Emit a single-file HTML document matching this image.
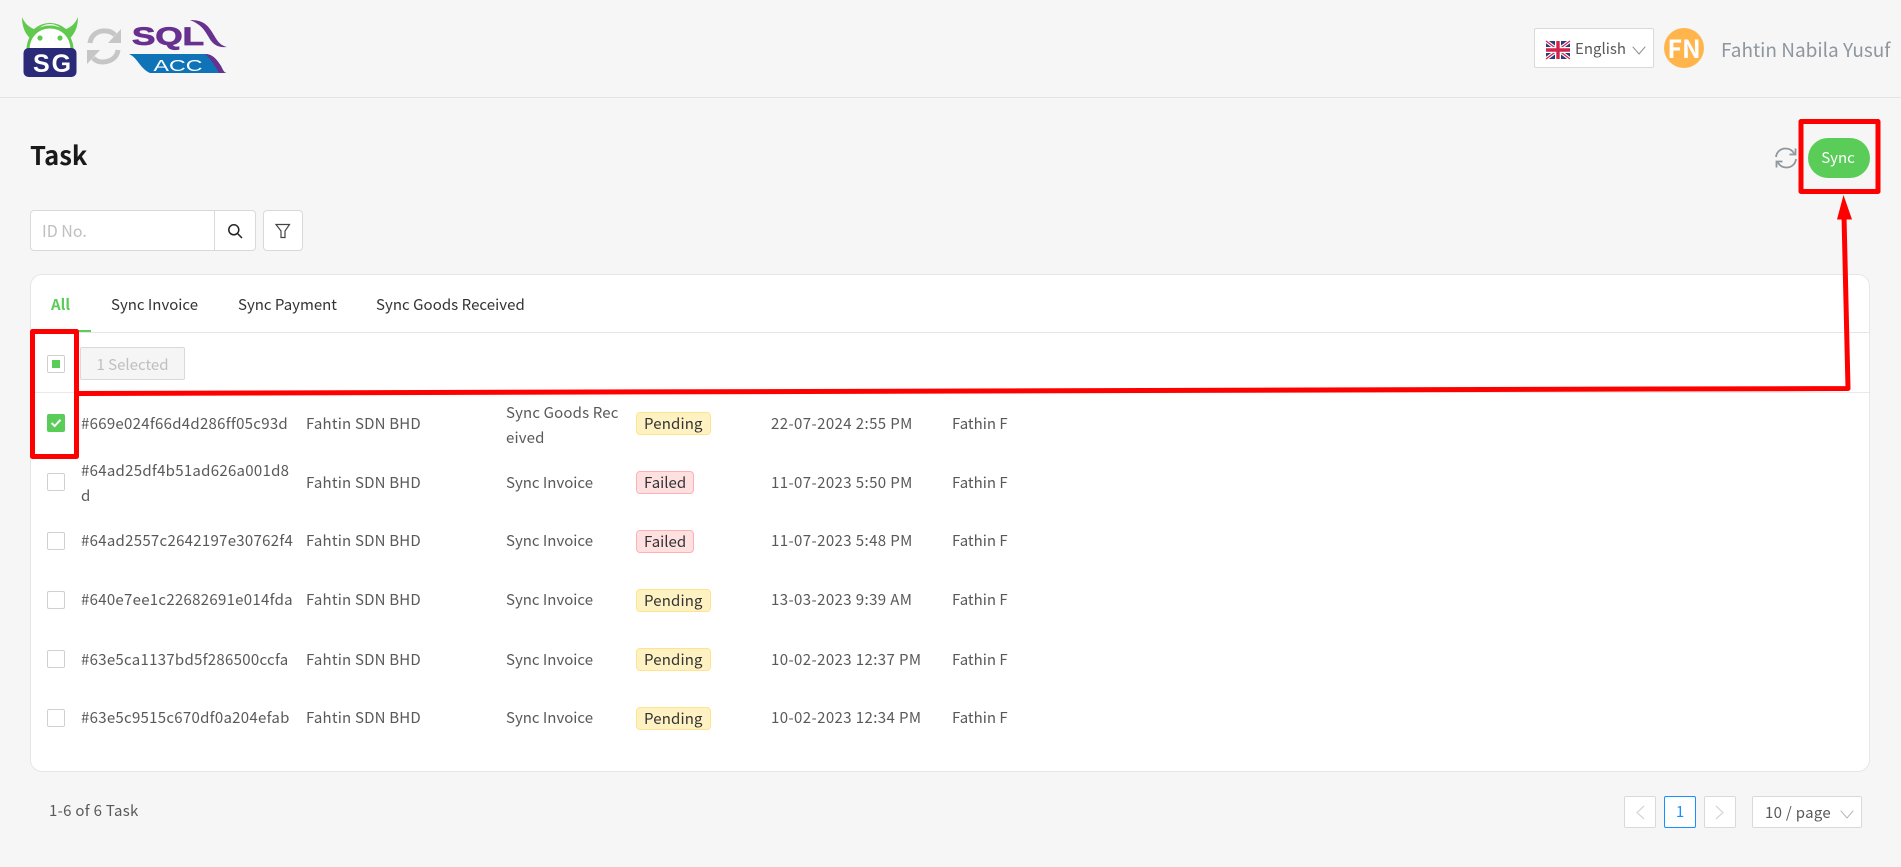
<!DOCTYPE html>
<html><head><meta charset="utf-8"><title>Task</title>
<style>
*{box-sizing:border-box}
html,body{margin:0;padding:0;width:1901px;height:867px;overflow:hidden;background:#f6f6f6}
body{position:relative;font-family:"Noto Sans CJK JP","Liberation Sans",sans-serif;font-size:15px;color:#595959}
.a{position:absolute;white-space:nowrap;line-height:20px}
.i{letter-spacing:.28px}
.c{letter-spacing:.2px}
.d{letter-spacing:.4px}
.box{position:absolute;background:#fff;border:1px solid #d9d9d9;border-radius:2px}
.cb{position:absolute;left:47px;width:18px;height:18px;background:#fff;border:1px solid #d0d0d0;border-radius:2px}
.tag{position:absolute;height:23px;line-height:21px;border-radius:4px;padding:0 7px;font-size:15px;color:#333}
.p{background:#fff2c2;border:1px solid #ffe38f;letter-spacing:.15px}
.f{background:#ffe0e0;border:1px solid #ffb0b0}
svg{position:absolute;overflow:visible}
</style></head><body>

<div style="position:absolute;left:0;top:97px;width:1901px;height:1px;background:#e4e4e4"></div>

<!-- logo -->
<svg style="left:0;top:0" width="240" height="90" viewBox="0 0 240 90">
<path d="M22 17C22 28 26 35 31 39C35 30 42 24 50 24C58 24 65 30 69 39C74 35 78 28 78 17C75 24 71 27 66 29C61 25 56 23 50 23C44 23 39 25 34 29C29 27 25 24 22 17Z" fill="#62c94f"/>
<path d="M28 50C28 36 38 27 50 27C62 27 72 36 72 50" fill="#fff" stroke="#62c94f" stroke-width="3"/>
<circle cx="40" cy="38" r="2.600" fill="#62c94f"/><circle cx="60" cy="38" r="2.600" fill="#62c94f"/>
<rect x="23.500" y="48" width="53" height="29" rx="5" fill="#2b2a78"/>
<text x="33" y="72" font-family="Liberation Sans" font-weight="700" font-size="25" letter-spacing="2" fill="#fff">SG</text>
<path d="M90 43C91 35 98 30 106 31C110 31 113 33 115 35" fill="none" stroke="#c6c6c6" stroke-width="5"/>
<path d="M121 29V43H108Z" fill="#c6c6c6"/>
<path d="M118 50C117 58 110 62 102 62C98 62 95 60 93 58" fill="none" stroke="#c6c6c6" stroke-width="5"/>
<path d="M87 64V50H100Z" fill="#c6c6c6"/>
<text x="132" y="45" font-family="Liberation Sans" font-weight="700" font-size="25" textLength="72" lengthAdjust="spacingAndGlyphs" fill="#68308f" stroke="#68308f" stroke-width=".8">SQL</text>
<path d="M190 20C202 20 207 24 212 32C217 40 219 45 227 47C216 48 212 43 208 36C204 29 200 24 190 20Z" fill="#68308f"/>
<path d="M129 54H205C213 54 217 60 221 66C223 70 224 73 227 73H150C145 71 141 66 138 62C135 58 133 56 129 54Z" fill="#0f73b8"/>
<path d="M205 54C213 54 217 60 221 66C223 70 224 73 227 73H219C216 68 212 60 205 54Z" fill="#68308f"/>
<text x="178" y="71" text-anchor="middle" font-family="Liberation Sans" font-size="16" textLength="49" lengthAdjust="spacingAndGlyphs" fill="#fff">ACC</text>
</svg>

<!-- language -->
<div class="box" style="left:1534px;top:28px;width:120px;height:40px"></div>
<svg style="left:1546px;top:41px" width="24" height="18" viewBox="0 0 24 18">
<rect width="24" height="18" fill="#2d3a7c"/>
<path d="M0 0L24 18M24 0L0 18" stroke="#fff" stroke-width="3.500"/>
<path d="M0 0L24 18M24 0L0 18" stroke="#d0244a" stroke-width="1.200"/>
<path d="M12 0V18M0 9H24" stroke="#fff" stroke-width="6"/>
<path d="M12 0V18M0 9H24" stroke="#d0244a" stroke-width="3.400"/>
</svg>
<div class="a" style="left:1575px;top:39px;color:#595959">English</div>
<svg style="left:1632px;top:46px" width="14" height="9" viewBox="0 0 14 9"><path d="M.7 .7L7 8L13.300 .7" fill="none" stroke="#8a8a8a" stroke-width="1"/></svg>

<div style="position:absolute;left:1664px;top:28px;width:40px;height:40px;border-radius:50%;background:#ffb54c;color:#fff;font-weight:700;font-size:25px;line-height:41px;text-align:center;font-family:'Noto Sans CJK JP','Liberation Sans',sans-serif">FN</div>
<div class="a" style="left:1721px;top:39px;font-size:19px;line-height:22px;color:#8f979e">Fahtin Nabila Yusuf</div>

<!-- title -->
<div class="a" style="left:30px;top:138px;font-size:25.600px;line-height:34px;font-weight:700;color:#1a1a1a">Task</div>

<svg style="left:1774px;top:146px" width="24" height="24" viewBox="0 0 24 24" fill="none" stroke="#8f979e" stroke-width="1.800">
<path d="M2 11C2.500 6 6.500 2.500 11.500 2.500C15.500 2.500 18.500 4.500 20 7.500"/><path d="M21.500 2.500V8.500H15.500"/>
<path d="M22 13C21.500 18 17.500 21.500 12.500 21.500C8.500 21.500 5.500 19.500 4 16.500"/><path d="M2.500 21.500V15.500H8.500"/>
</svg>
<div style="position:absolute;left:1808px;top:138px;width:62px;height:40px;border-radius:20px;background:#5acd58;color:#fff;text-align:center;line-height:39px;font-size:15px;padding-right:2px">Sync</div>

<!-- search -->
<div class="box" style="left:30px;top:210px;width:226px;height:41px;border-radius:4px"></div>
<div style="position:absolute;left:214px;top:210px;width:1px;height:41px;background:#d9d9d9"></div>
<div class="a" style="left:42px;top:220px;color:#bfbfbf;font-size:16px">ID No.</div>
<svg style="left:227px;top:223px" width="16" height="16" viewBox="0 0 16 16" fill="none" stroke="#222" stroke-width="1.500"><circle cx="6.800" cy="6.800" r="5"/><path d="M10.500 10.500L15 15"/></svg>
<div class="box" style="left:263px;top:210px;width:40px;height:41px;border-radius:4px"></div>
<svg style="left:275px;top:223px" width="16" height="16" viewBox="0 0 16 16" fill="none" stroke="#444" stroke-width="1.200"><path d="M1 1.500H14.500L10 8V14.500L6 14.500V8Z"/></svg>

<!-- card -->
<div style="position:absolute;left:30px;top:274px;width:1840px;height:498px;background:#fff;border:1px solid #e6e6e6;border-radius:12px"></div>
<div style="position:absolute;left:31px;top:332px;width:1838px;height:1px;background:#e6e6e6"></div>
<div style="position:absolute;left:31px;top:392px;width:1838px;height:1px;background:#e9e9e9"></div>
<div style="position:absolute;left:31px;top:330px;width:60px;height:2px;background:#5acd58"></div>
<div class="a" style="left:51px;top:295px;color:#5acd58;font-weight:700">All</div>
<div class="a" style="left:111px;top:295px;color:#333">Sync Invoice</div>
<div class="a" style="left:238px;top:295px;color:#333">Sync Payment</div>
<div class="a" style="left:376px;top:295px;color:#333;letter-spacing:.05px">Sync Goods Received</div>

<!-- bulk -->
<div class="cb" style="top:355px"></div>
<div style="position:absolute;left:52px;top:360px;width:8px;height:8px;background:#5acd58"></div>
<div class="box" style="left:80px;top:347px;width:105px;height:33px;background:#f5f5f5;color:#bfbfbf;text-align:center;line-height:34px;font-size:15px">1 Selected</div>

<!-- rows -->
<div class="cb" style="top:414px;background:#5acd58;border-color:#5acd58"></div>
<svg style="left:50px;top:418px" width="12" height="10" viewBox="0 0 12 10"><path d="M1.500 5L4.700 8L10.500 1.800" fill="none" stroke="#fff" stroke-width="2"/></svg>
<div class="a i" style="left:81px;top:414px">#669e024f66d4d286ff05c93d</div>
<div class="a c" style="left:306px;top:414px">Fahtin SDN BHD</div>
<div class="a" style="left:506px;top:400px;line-height:25px;letter-spacing:.15px">Sync Goods Rec<br>eived</div>
<div class="tag p" style="left:636px;top:412px">Pending</div>
<div class="a d" style="left:771px;top:414px">22-07-2024 2:55 PM</div>
<div class="a" style="left:952px;top:414px">Fathin F</div>

<div class="cb" style="top:473px"></div>
<div class="a i" style="left:81px;top:458px;line-height:25px">#64ad25df4b51ad626a001d8<br>d</div>
<div class="a c" style="left:306px;top:473px">Fahtin SDN BHD</div>
<div class="a" style="left:506px;top:473px">Sync Invoice</div>
<div class="tag f" style="left:636px;top:471px">Failed</div>
<div class="a d" style="left:771px;top:473px">11-07-2023 5:50 PM</div>
<div class="a" style="left:952px;top:473px">Fathin F</div>

<div class="cb" style="top:532px"></div>
<div class="a i" style="left:81px;top:531px">#64ad2557c2642197e30762f4</div>
<div class="a c" style="left:306px;top:531px">Fahtin SDN BHD</div>
<div class="a" style="left:506px;top:531px">Sync Invoice</div>
<div class="tag f" style="left:636px;top:530px">Failed</div>
<div class="a d" style="left:771px;top:531px">11-07-2023 5:48 PM</div>
<div class="a" style="left:952px;top:531px">Fathin F</div>

<div class="cb" style="top:591px"></div>
<div class="a i" style="left:81px;top:590px">#640e7ee1c22682691e014fda</div>
<div class="a c" style="left:306px;top:590px">Fahtin SDN BHD</div>
<div class="a" style="left:506px;top:590px">Sync Invoice</div>
<div class="tag p" style="left:636px;top:589px">Pending</div>
<div class="a d" style="left:771px;top:590px">13-03-2023 9:39 AM</div>
<div class="a" style="left:952px;top:590px">Fathin F</div>

<div class="cb" style="top:650px"></div>
<div class="a i" style="left:81px;top:650px">#63e5ca1137bd5f286500ccfa</div>
<div class="a c" style="left:306px;top:650px">Fahtin SDN BHD</div>
<div class="a" style="left:506px;top:650px">Sync Invoice</div>
<div class="tag p" style="left:636px;top:648px">Pending</div>
<div class="a d" style="left:771px;top:650px">10-02-2023 12:37 PM</div>
<div class="a" style="left:952px;top:650px">Fathin F</div>

<div class="cb" style="top:709px"></div>
<div class="a i" style="left:81px;top:708px">#63e5c9515c670df0a204efab</div>
<div class="a c" style="left:306px;top:708px">Fahtin SDN BHD</div>
<div class="a" style="left:506px;top:708px">Sync Invoice</div>
<div class="tag p" style="left:636px;top:707px">Pending</div>
<div class="a d" style="left:771px;top:708px">10-02-2023 12:34 PM</div>
<div class="a" style="left:952px;top:708px">Fathin F</div>

<!-- footer -->
<div class="a" style="left:49px;top:801px;letter-spacing:.3px">1-6 of 6 Task</div>
<div class="box" style="left:1624px;top:796px;width:32px;height:32px"></div>
<svg style="left:1635px;top:805px" width="10" height="15" viewBox="0 0 10 15"><path d="M9 1L2 7.500L9 14" fill="none" stroke="#d6d6d6" stroke-width="1.200"/></svg>
<div class="box" style="left:1664px;top:796px;width:32px;height:32px;border-color:#1890ff;color:#1890ff;text-align:center;line-height:30px">1</div>
<div class="box" style="left:1704px;top:796px;width:32px;height:32px"></div>
<svg style="left:1715px;top:805px" width="10" height="15" viewBox="0 0 10 15"><path d="M1 1L8 7.500L1 14" fill="none" stroke="#d6d6d6" stroke-width="1.200"/></svg>
<div class="box" style="left:1752px;top:796px;width:110px;height:32px"></div>
<div class="a" style="left:1765px;top:803px;letter-spacing:.3px">10 / page</div>
<svg style="left:1840px;top:810px" width="14" height="9" viewBox="0 0 14 9"><path d="M.7 .7L7 8L13.300 .7" fill="none" stroke="#b5b5b5" stroke-width="1"/></svg>

<!-- annotations -->
<svg style="left:0;top:0" width="1901" height="867" viewBox="0 0 1901 867" fill="none" stroke="#ff0000">
<rect x="1801" y="121.500" width="77" height="70" stroke-width="5" stroke-linejoin="round"/>
<rect x="32.500" y="331.500" width="44" height="125" stroke-width="5" stroke-linejoin="round"/>
<path d="M78 393.500L1848 388.500L1844 216" stroke-width="5" stroke-linejoin="round"/>
<path d="M1843.500 195L1852 219.500H1837Z" fill="#ff0000" stroke="none"/>
</svg>
</body></html>
